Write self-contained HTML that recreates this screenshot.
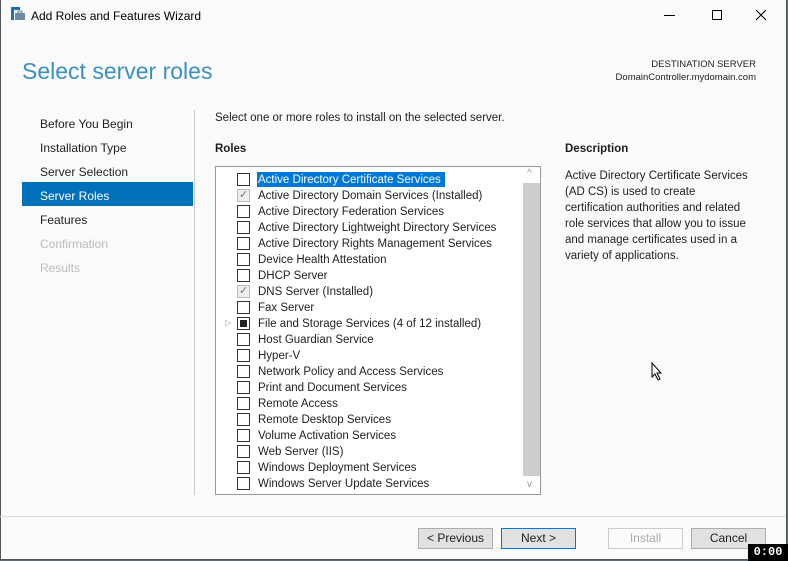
<!DOCTYPE html>
<html><head><style>
*{margin:0;padding:0;box-sizing:border-box}
body{width:788px;height:561px;background:#5a6a7a;font-family:"Liberation Sans",sans-serif;font-size:11.5px;color:#1e1e1e;position:relative;overflow:hidden}
.win{position:absolute;left:0;top:0;width:787px;height:560px;background:#fafafa;box-shadow:inset 1px 0 0 #555,inset -1px 0 0 #555,inset 0 -1px 0 #555}
.abs{position:absolute;white-space:nowrap}
.nav{position:absolute;left:40px;font-size:12px;color:#1e1e1e}
.row{position:absolute;left:258px;height:16px;line-height:16px}
.cb{position:absolute;left:237px;width:13px;height:13px;border:1px solid #333;background:#fff}
.cb.g{border-color:#bbb;background:#eee}
.btn{position:absolute;top:528px;height:21px;border:1px solid #adadad;background:#e1e1e1;text-align:center;line-height:19px;font-size:12px}
</style></head><body>
<div class="win">
<svg class="abs" style="left:10px;top:6px" width="16" height="16" viewBox="0 0 16 16"><rect x="1" y="1" width="3" height="13" fill="#1e6fb8"/><rect x="1" y="1" width="9" height="3" fill="#1e6fb8"/><rect x="5" y="7" width="10" height="7" fill="#6e8aa0"/><rect x="8" y="5" width="4" height="2" fill="none" stroke="#6e8aa0"/></svg>
<div class="abs" style="left:31px;top:9px;font-size:12px;color:#000">Add Roles and Features Wizard</div>
<div class="abs" style="left:664px;top:15px;width:11px;height:1px;background:#000"></div>
<div class="abs" style="left:712px;top:10px;width:10px;height:10px;border:1px solid #000"></div>
<svg class="abs" style="left:755px;top:9px" width="12" height="12"><path d="M1 1L11 11M11 1L1 11" stroke="#000" stroke-width="1"/></svg>
<div class="abs" style="left:22px;top:58px;font-size:23px;color:#3a8fc4">Select server roles</div>
<div class="abs" style="right:31px;top:58px;font-size:9.5px;text-align:right;line-height:13px">DESTINATION SERVER<br>DomainController.mydomain.com</div>
<div class="nav" style="top:117px">Before You Begin</div>
<div class="nav" style="top:141px">Installation Type</div>
<div class="nav" style="top:165px">Server Selection</div>
<div class="abs" style="left:22px;top:182px;width:171px;height:24px;background:#0070bb"></div>
<div class="nav" style="top:189px;color:#fff">Server Roles</div>
<div class="nav" style="top:213px">Features</div>
<div class="nav" style="top:237px;color:#bbb">Confirmation</div>
<div class="nav" style="top:261px;color:#bbb">Results</div>
<div class="abs" style="left:194px;top:110px;width:1px;height:385px;background:#ccc"></div>
<div class="abs" style="left:215px;top:112px">Select one or more roles to install on the selected server.</div>
<div class="abs" style="left:215px;top:143px;font-weight:bold">Roles</div>
<div class="abs" style="left:565px;top:143px;font-weight:bold">Description</div>
<div class="abs" style="left:565px;top:168px;line-height:16px;white-space:normal;width:190px">Active Directory Certificate Services (AD CS) is used to create certification authorities and related role services that allow you to issue and manage certificates used in a variety of applications.</div>
<div class="abs" style="left:215px;top:166px;width:326px;height:329px;border:1px solid #999;background:#fff"></div>
<div class="abs" style="left:523px;top:183px;width:17px;height:293px;background:#cdcdcd"></div>
<div class="abs" style="left:527px;top:168px;color:#999;font-size:10px">^</div>
<div class="abs" style="left:527px;top:479px;color:#999;font-size:10px">v</div>
<div class="abs" style="left:257px;top:172px;width:188px;height:15px;background:#0078d7"></div>
<div class="row" style="top:172px;color:#fff">Active Directory Certificate Services</div>
<div class="cb" style="top:173px"></div>
<div class="cb g" style="top:189px"></div><div class="abs" style="left:239px;top:188px;color:#777;font-size:11px">✓</div><div class="row" style="top:188px">Active Directory Domain Services (Installed)</div>
<div class="cb" style="top:205px"></div><div class="row" style="top:204px">Active Directory Federation Services</div>
<div class="cb" style="top:221px"></div><div class="row" style="top:220px">Active Directory Lightweight Directory Services</div>
<div class="cb" style="top:237px"></div><div class="row" style="top:236px">Active Directory Rights Management Services</div>
<div class="cb" style="top:253px"></div><div class="row" style="top:252px">Device Health Attestation</div>
<div class="cb" style="top:269px"></div><div class="row" style="top:268px">DHCP Server</div>
<div class="cb g" style="top:285px"></div><div class="abs" style="left:239px;top:284px;color:#777;font-size:11px">✓</div><div class="row" style="top:284px">DNS Server (Installed)</div>
<div class="cb" style="top:301px"></div><div class="row" style="top:300px">Fax Server</div>
<div class="abs" style="left:225px;top:318px;color:#999;font-size:8px">▷</div>
<div class="cb" style="top:317px"></div><div class="abs" style="left:240px;top:320px;width:7px;height:7px;background:#222"></div><div class="row" style="top:316px">File and Storage Services (4 of 12 installed)</div>
<div class="cb" style="top:333px"></div><div class="row" style="top:332px">Host Guardian Service</div>
<div class="cb" style="top:349px"></div><div class="row" style="top:348px">Hyper-V</div>
<div class="cb" style="top:365px"></div><div class="row" style="top:364px">Network Policy and Access Services</div>
<div class="cb" style="top:381px"></div><div class="row" style="top:380px">Print and Document Services</div>
<div class="cb" style="top:397px"></div><div class="row" style="top:396px">Remote Access</div>
<div class="cb" style="top:413px"></div><div class="row" style="top:412px">Remote Desktop Services</div>
<div class="cb" style="top:429px"></div><div class="row" style="top:428px">Volume Activation Services</div>
<div class="cb" style="top:445px"></div><div class="row" style="top:444px">Web Server (IIS)</div>
<div class="cb" style="top:461px"></div><div class="row" style="top:460px">Windows Deployment Services</div>
<div class="cb" style="top:477px"></div><div class="row" style="top:476px">Windows Server Update Services</div>
<svg class="abs" style="left:651px;top:362px" width="12" height="20"><path d="M1 1L1 15L4 12L7 18L9 17L6 11L10 11Z" fill="#fff" stroke="#000"/></svg>
<div class="abs" style="left:0;top:516px;width:786px;height:1px;background:#ddd"></div>
<div class="btn" style="left:418px;width:75px">&lt; Previous</div>
<div class="btn" style="left:501px;width:75px;border-color:#0078d7">Next &gt;</div>
<div class="btn" style="left:608px;width:75px;background:#fafafa;border-color:#ccc;color:#aaa">Install</div>
<div class="btn" style="left:691px;width:75px">Cancel</div>
</div>
<div class="abs" style="left:748px;top:544px;width:40px;height:17px;background:#000;color:#fff;font-family:'Liberation Mono',monospace;font-weight:bold;font-size:12px;line-height:17px;text-align:center">0:00</div>
</body></html>
